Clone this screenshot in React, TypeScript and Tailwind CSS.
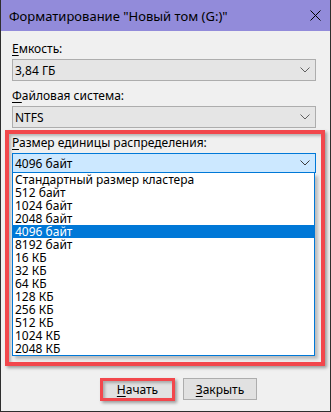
import React from "react";

const Chevron = ({ dark }: { dark?: boolean }) => (
  <svg width="10" height="6" viewBox="0 0 10 6" className="shrink-0">
    <polyline
      points="0.5,0.5 5,5 9.5,0.5"
      fill="none"
      stroke={dark ? "#3c3c3c" : "#606060"}
      strokeWidth="1"
    />
  </svg>
);

const items = [
  "Стандартный размер кластера",
  "512 байт",
  "1024 байт",
  "2048 байт",
  "4096 байт",
  "8192 байт",
  "16 КБ",
  "32 КБ",
  "64 КБ",
  "128 КБ",
  "256 КБ",
  "512 КБ",
  "1024 КБ",
  "2048 КБ",
];

export default function App() {
  return (
    <div
      className="w-[331px] h-[412px] flex flex-col bg-[#f0f0f0] border-x border-b border-[#2e2e2e] text-black text-[12px] overflow-hidden"
      style={{ fontFamily: '"Noto Sans", "Open Sans", sans-serif' }}
    >
      {/* Title bar */}
      <div className="h-[31px] shrink-0 bg-[#928bda] flex items-center pl-[8px] pr-[9px]">
        <span className="text-[13px] leading-[16px]">Форматирование "Новый том (G:)"</span>
        <svg width="11" height="11" viewBox="0 0 11 11" className="ml-auto">
          <path d="M0.5 0.5 L10.5 10.5 M10.5 0.5 L0.5 10.5" stroke="#000" strokeWidth="1" />
        </svg>
      </div>

      {/* Body */}
      <div className="flex flex-col pl-[11px] pr-[14px]">
        <div className="mt-[10px] leading-[15px] h-[15px]">
          <span className="underline underline-offset-2">Е</span>мкость:
        </div>
        <div className="mt-[3px] h-[22px] bg-[#e5e5e5] border border-[#adadad] flex items-center pl-[2px] pr-[5px]">
          <span className="leading-[15px]">3,84 ГБ</span>
          <span className="ml-auto"><Chevron /></span>
        </div>

        <div className="mt-[7px] leading-[15px] h-[15px]">
          <span className="underline underline-offset-2">Ф</span>айловая система:
        </div>
        <div className="mt-[3px] h-[22px] bg-[#e5e5e5] border border-[#adadad] flex items-center pl-[2px] pr-[5px]">
          <span className="leading-[15px]">NTFS</span>
          <span className="ml-auto"><Chevron /></span>
        </div>

        {/* Highlighted section */}
        <div className="mt-[2px] ml-[-7px] mr-[-9px] border-[4px] border-[#f2474c] pl-[3px] pr-[5px] pt-[1px] pb-[6px] shadow-[2px_2px_3px_rgba(0,0,0,0.35),inset_2px_2px_3px_rgba(0,0,0,0.25)]">
          <div className="leading-[15px] h-[15px]">
            <span className="underline underline-offset-2">Р</span>азмер единицы распределения:
          </div>
          <div className="mt-[3px] h-[20px] bg-[#cce8ff] border border-[#0078d7] flex items-center pl-[2px] pr-[5px]">
            <span className="leading-[15px]">4096 байт</span>
            <span className="ml-auto"><Chevron dark /></span>
          </div>
          <div className="bg-white border-x border-b border-[#0078d7] mr-[1px] shadow-[3px_3px_3px_rgba(0,0,0,0.22)]">
            {items.map((it) => {
              const sel = it === "4096 байт";
              return (
                <div
                  key={it}
                  className={
                    "h-[13px] leading-[13px] pl-[2px] whitespace-nowrap " +
                    (sel ? "bg-[#0078d7] text-white" : "")
                  }
                >
                  {it}
                </div>
              );
            })}
          </div>
        </div>

        {/* Buttons */}
        <div className="mt-[12px] flex pl-[88px] gap-[8px]">
          <div className="w-[75px] h-[23px] bg-[#e1e1e1] border-[3px] border-[#f2474c] flex items-center justify-center shadow-[2px_2px_3px_rgba(0,0,0,0.35),inset_2px_2px_3px_rgba(0,0,0,0.25)]">
            <span className="leading-[15px]">
              <span className="underline underline-offset-2">Н</span>ачать
            </span>
          </div>
          <div className="w-[74px] h-[22px] bg-[#e1e1e1] border border-[#adadad] flex items-center justify-center">
            <span className="leading-[15px]">
              <span className="underline underline-offset-2">З</span>акрыть
            </span>
          </div>
        </div>
      </div>
    </div>
  );
}
